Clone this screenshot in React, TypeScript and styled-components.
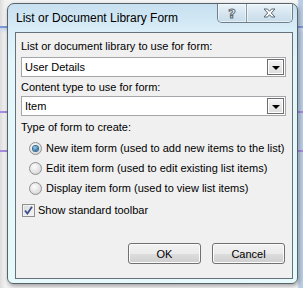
import styled, { createGlobalStyle } from "styled-components"

const GlobalStyle = createGlobalStyle`
  html, body {
    margin: 0;
    padding: 0;
  }
  body {
    font-family: "Liberation Sans", Arial, sans-serif;
    font-size: 11px;
    color: #000;
  }
`

const Desktop = styled.div`
  width: 303px;
  height: 288px;
  box-sizing: border-box;
  padding: 3px 5px 4px 7px;
  overflow: hidden;
  background:
    linear-gradient(#ffffff00 111px, #a58be0 111px, #a58be0 113px, #ffffff00 113px),
    linear-gradient(#ffffff00 150px, #a58be0 150px, #a58be0 152px, #ffffff00 152px),
    linear-gradient(#ffffff00 26px, #7d97d8 26px, #7d97d8 28px, #c9d6f0 28px, #ffffff00 33px),
    linear-gradient(90deg, #dcdcdc, #f2f2f2 5px, #f7f7f7 297px, #b9cde6 299px);
`

const Window = styled.div`
  height: 100%;
  box-sizing: border-box;
  display: flex;
  flex-direction: column;
  border: 1px solid #56636b;
  border-radius: 7px 7px 6px 6px;
  padding: 0 4px 4px 7px;
  background: linear-gradient(#c7dff0, #d9eef8 28px, #e3f7fb 60px, #e6fafc);
  box-shadow: 1px 2px 4px rgba(0, 0, 0, 0.35);
`

const TitleBar = styled.div`
  height: 28px;
  display: flex;
  align-items: flex-start;
`

const Title = styled.div`
  padding: 4px 0 0 1px;
  line-height: 20px;
  font-size: 12px;
`

const CaptionGroup = styled.div`
  margin-left: auto;
  display: flex;
  height: 18px;
  border: 1px solid #6f7e89;
  border-top: none;
  border-radius: 0 0 5px 5px;
  background: linear-gradient(#eaf3f9, #d6e6f1 50%, #c8dcea);
  overflow: hidden;
`

const CaptionButton = styled.div<{ $w: number; $divider?: boolean }>`
  width: ${(p) => p.$w}px;
  height: 100%;
  display: flex;
  align-items: center;
  justify-content: center;
  border-right: ${(p) => (p.$divider ? "1px solid #8b99a3" : "none")};
  box-shadow: inset 0 0 0 1px rgba(255, 255, 255, 0.55);
`

const HelpGlyph = styled.span`
  font-family: "DejaVu Sans", sans-serif;
  font-weight: bold;
  font-size: 13px;
  line-height: 13px;
  color: #fff;
  -webkit-text-stroke: 1px #5b6670;
`

const Client = styled.div`
  flex: 1;
  display: flex;
  flex-direction: column;
  border: 1px solid #65727a;
  background: #f0f0f0;
  padding: 5px 6px 14px 5px;
`

const Label = styled.div<{ $gap?: number }>`
  line-height: 16px;
  height: 16px;
  margin-top: ${(p) => p.$gap ?? 0}px;
  white-space: nowrap;
`

const Combo = styled.div<{ $gap: number }>`
  margin-top: ${(p) => p.$gap}px;
  height: 20px;
  box-sizing: border-box;
  display: flex;
  align-items: center;
  border: 1px solid #a4a6aa;
  background: #fff;
  padding: 0 1px 0 3px;
`

const ComboText = styled.span`
  flex: 1;
  line-height: 16px;
`

const ComboButton = styled.div`
  width: 17px;
  height: 16px;
  box-sizing: border-box;
  border: 1px solid #6d6d6d;
  background: linear-gradient(#f4f4f4, #dcdcdc);
  box-shadow: inset 0 0 0 1px #fff;
  display: flex;
  align-items: center;
  justify-content: center;
`

const Arrow = styled.div`
  width: 0;
  height: 0;
  margin-top: 1px;
  border-left: 4px solid transparent;
  border-right: 4px solid transparent;
  border-top: 4px solid #000;
`

const Options = styled.div`
  margin-top: 3px;
  display: flex;
  flex-direction: column;
`

const OptionRow = styled.label`
  height: 20px;
  display: flex;
  align-items: center;
  padding-left: 8px;
  white-space: nowrap;
`

const Radio = styled.span<{ $checked?: boolean }>`
  flex-shrink: 0;
  width: 13px;
  height: 13px;
  box-sizing: border-box;
  border-radius: 50%;
  border: 1px solid #8f9092;
  background: radial-gradient(circle at 40% 35%, #fdfdfd, #e2e2e2 55%, #cdcdcd);
  margin-right: 4px;
  display: flex;
  align-items: center;
  justify-content: center;
  &::after {
    content: "";
    display: ${(p) => (p.$checked ? "block" : "none")};
    width: 5px;
    height: 5px;
    border-radius: 50%;
    background: radial-gradient(circle at 40% 35%, #9fd4f4, #2d6f9e 70%, #1d4f74);
    box-shadow: 0 0 0 1px #356a92;
  }
`

const CheckRow = styled.label`
  margin-top: 2px;
  height: 20px;
  display: flex;
  align-items: center;
  padding-left: 1px;
`

const CheckBox = styled.span`
  flex-shrink: 0;
  width: 13px;
  height: 13px;
  box-sizing: border-box;
  border: 1px solid #8f8f8f;
  background: linear-gradient(135deg, #d9d9d9, #f7f7f7);
  box-shadow: inset 0 0 0 1px #f2f2f2;
  margin-right: 3px;
  display: flex;
  align-items: center;
  justify-content: center;
`

const Buttons = styled.div`
  margin-top: auto;
  display: flex;
  justify-content: flex-end;
  gap: 11px;
  padding-right: 1px;
`

const Button = styled.button`
  width: 73px;
  height: 21px;
  box-sizing: border-box;
  border: 1px solid #707070;
  border-radius: 3px;
  background: linear-gradient(#f2f2f2, #ebebeb 50%, #dddddd 51%, #cfcfcf);
  box-shadow: inset 0 0 0 1px #fcfcfc;
  font-family: inherit;
  font-size: 11px;
  color: #000;
  padding: 0;
`

const options = [
    { text: "New item form (used to add new items to the list)", checked: true },
    { text: "Edit item form (used to edit existing list items)" },
    { text: "Display item form (used to view list items)" },
]

export default function App() {
    return (
        <>
            <GlobalStyle />
            <Desktop>
                <Window>
                    <TitleBar>
                        <Title>List or Document Library Form</Title>
                        <CaptionGroup>
                            <CaptionButton $w={28} $divider>
                                <HelpGlyph>?</HelpGlyph>
                            </CaptionButton>
                            <CaptionButton $w={45}>
                                <svg width="13" height="10" viewBox="0 0 13 10">
                                    <path
                                        d="M1 1 H4.5 L6.5 3.3 L8.5 1 H12 L8.3 5 L12 9 H8.5 L6.5 6.7 L4.5 9 H1 L4.7 5 Z"
                                        fill="#fff"
                                        stroke="#5b6670"
                                        strokeWidth="1"
                                        strokeLinejoin="round"
                                    />
                                </svg>
                            </CaptionButton>
                        </CaptionGroup>
                    </TitleBar>
                    <Client>
                        <Label>List or document library to use for form:</Label>
                        <Combo $gap={3}>
                            <ComboText>User Details</ComboText>
                            <ComboButton>
                                <Arrow />
                            </ComboButton>
                        </Combo>
                        <Label $gap={2}>Content type to use for form:</Label>
                        <Combo $gap={1}>
                            <ComboText>Item</ComboText>
                            <ComboButton>
                                <Arrow />
                            </ComboButton>
                        </Combo>
                        <Label $gap={3}>Type of form to create:</Label>
                        <Options>
                            {options.map((o) => (
                                <OptionRow key={o.text}>
                                    <Radio $checked={o.checked} />
                                    {o.text}
                                </OptionRow>
                            ))}
                        </Options>
                        <CheckRow>
                            <CheckBox>
                                <svg width="9" height="9" viewBox="0 0 9 9">
                                    <path
                                        d="M1 4.5 L3.4 7.5 L8 0.8"
                                        fill="none"
                                        stroke="#3b4f8c"
                                        strokeWidth="1.8"
                                    />
                                </svg>
                            </CheckBox>
                            Show standard toolbar
                        </CheckRow>
                        <Buttons>
                            <Button>OK</Button>
                            <Button>Cancel</Button>
                        </Buttons>
                    </Client>
                </Window>
            </Desktop>
        </>
    )
}
